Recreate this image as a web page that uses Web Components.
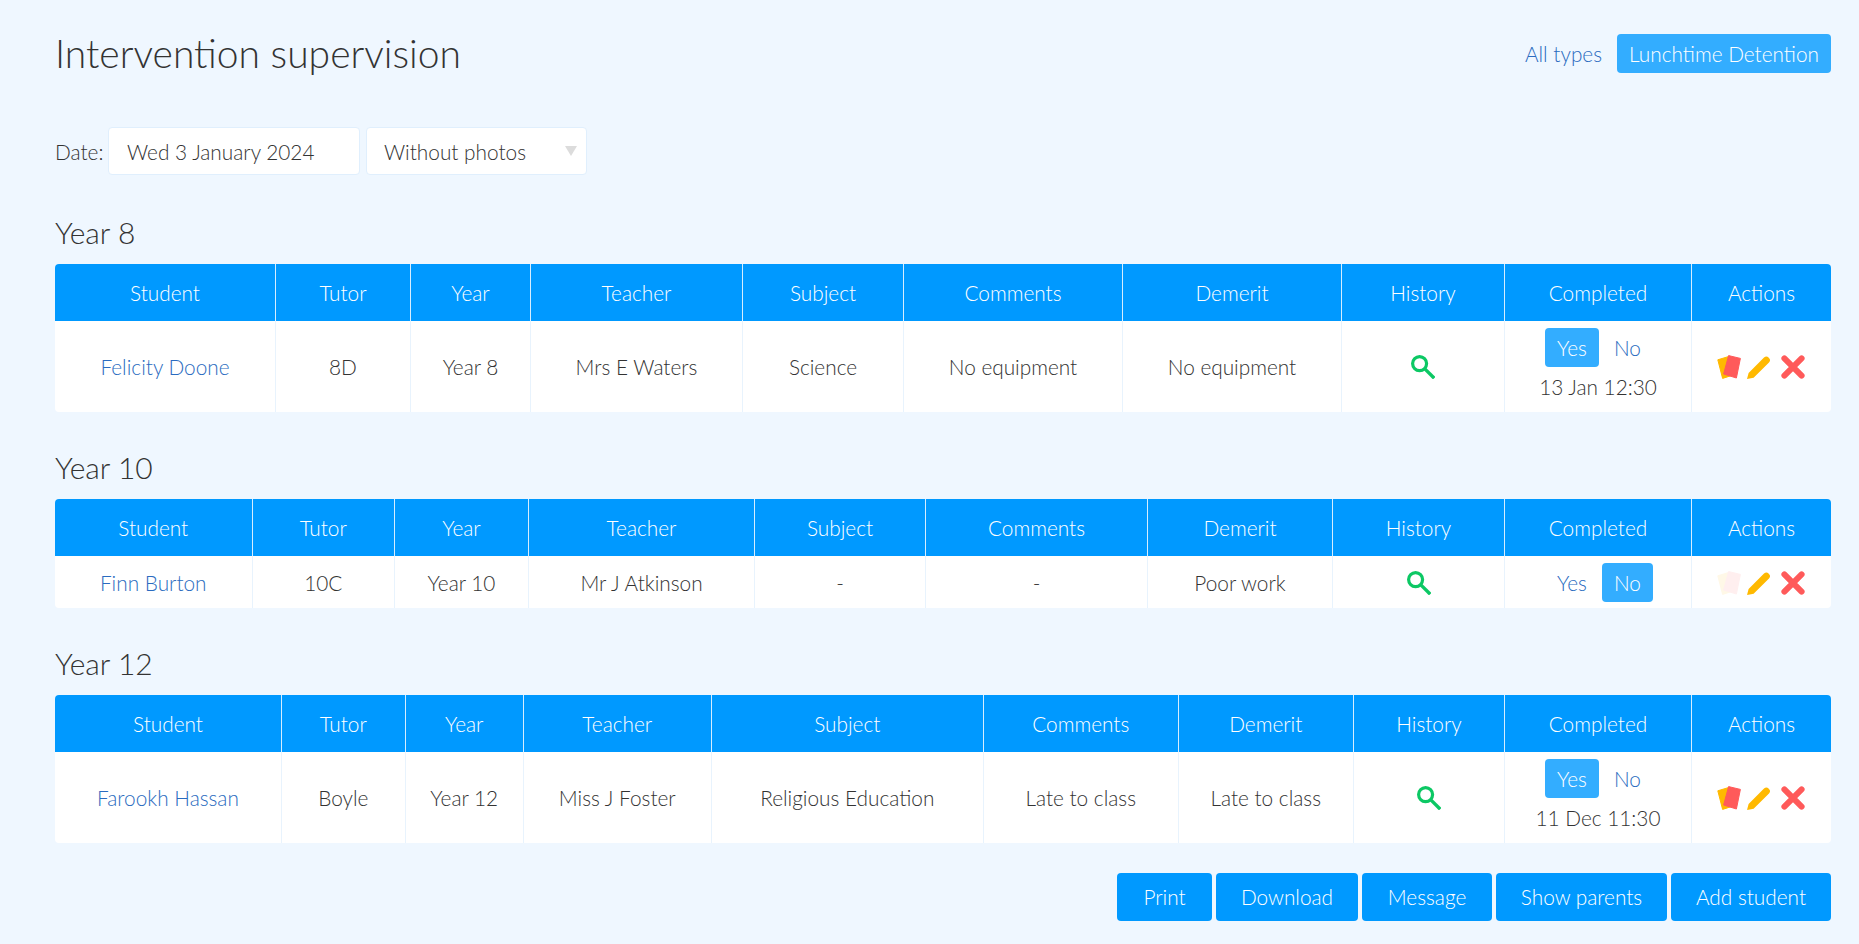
<!DOCTYPE html>
<html lang="en">
<head>
<meta charset="utf-8">
<title>Intervention supervision</title>
<style>
  html, body { margin: 0; padding: 0; background: #eff7ff; }
  body { font-family: Lato, "Liberation Sans", sans-serif; font-weight: 300; font-size: 20.8px; color: #333; }
</style>
</head>
<body>
<intervention-page>
  <page-header heading="Intervention supervision">
    <a-link>All types</a-link>
    <a-button variant="active">Lunchtime Detention</a-button>
  </page-header>
  <date-filter date="Wed 3 January 2024" mode="Without photos"></date-filter>
  <year-table heading="Year 8" edges="55,276,411,531,743,904,1123,1342,1505,1692,1831"
    data='{"student":"Felicity Doone","tutor":"8D","year":"Year 8","teacher":"Mrs E Waters","subject":"Science","comments":"No equipment","demerit":"No equipment","done":"yes","date":"13 Jan 12:30"}'></year-table>
  <year-table heading="Year 10" edges="55,252.5,395,529,755,926,1148,1333,1505,1692,1831"
    data='{"student":"Finn Burton","tutor":"10C","year":"Year 10","teacher":"Mr J Atkinson","subject":"-","comments":"-","demerit":"Poor work","done":"no","faded":true}'></year-table>
  <year-table heading="Year 12" edges="55,282,405.5,524,711.5,984,1178.5,1354,1505,1692,1831"
    data='{"student":"Farookh Hassan","tutor":"Boyle","year":"Year 12","teacher":"Miss J Foster","subject":"Religious Education","comments":"Late to class","demerit":"Late to class","done":"yes","date":"11 Dec 11:30"}'></year-table>
  <action-bar>
    <a-button variant="solid" w="95">Print</a-button>
    <a-button variant="solid" w="142">Download</a-button>
    <a-button variant="solid" w="130">Message</a-button>
    <a-button variant="solid" w="171">Show parents</a-button>
    <a-button variant="solid" w="160">Add student</a-button>
  </action-bar>
</intervention-page>

<script>
function shadow(el, html) {
  el.attachShadow({ mode: 'open' }).innerHTML = html;
}

customElements.define('intervention-page', class extends HTMLElement {
  connectedCallback() {
    shadow(this, `<style>
      :host { display: block; box-sizing: border-box; width: 1859px; height: 944px; padding: 34px 28px 0 55px; overflow: hidden; }
    </style><slot></slot>`);
  }
});

customElements.define('page-header', class extends HTMLElement {
  connectedCallback() {
    shadow(this, `<style>
      :host { display: flex; justify-content: space-between; align-items: flex-start; height: 93px; }
      h1 { margin: -5px 0 0 0; font: 300 39px/48px Lato, sans-serif; color: #333; height: 48px; }
      .right { display: flex; align-items: center; gap: 15px; }
    </style><h1>${this.getAttribute('heading')}</h1><div class="right"><slot></slot></div>`);
  }
});

customElements.define('a-link', class extends HTMLElement {
  connectedCallback() {
    shadow(this, `<style>
      :host { display: inline-block; color: #2a6bc0; font-size: 20.8px; line-height: 24px; }
    </style><slot></slot>`);
  }
});

customElements.define('a-button', class extends HTMLElement {
  connectedCallback() {
    const solid = this.getAttribute('variant') === 'solid';
    const w = this.getAttribute('w');
    shadow(this, `<style>
      :host { display: inline-flex; align-items: center; justify-content: center; box-sizing: border-box;
        border-radius: 4px; color: #fff; font-size: 20.8px; white-space: nowrap;
        background: ${solid ? '#0099ff' : '#33adff'};
        height: ${solid ? 48 : 39}px; ${w ? `width: ${w}px; padding-bottom: 2px;` : 'padding: 0 12px;'} }
    </style><slot></slot>`);
  }
});

customElements.define('date-filter', class extends HTMLElement {
  connectedCallback() {
    shadow(this, `<style>
      :host { display: flex; align-items: center; height: 48px; margin-bottom: 2px; color: #333; font-size: 20.8px; }
      .label { width: 53px; flex: none; }
      .box { box-sizing: border-box; height: 48px; background: #fff; border: 1px solid #e0effd; border-radius: 4px;
        display: flex; align-items: center; flex: none; padding-top: 1px; }
      .date { width: 252px; padding-left: 18px; margin-right: 6px; }
      .select { width: 221px; padding-left: 17px; position: relative; }
      .arrow { position: absolute; right: 9px; top: 18px; width: 0; height: 0;
        border-left: 6px solid transparent; border-right: 6px solid transparent; border-top: 10px solid #dcdcdc; }
    </style>
    <span class="label">Date:</span>
    <div class="box date">${this.getAttribute('date')}</div>
    <div class="box select">${this.getAttribute('mode')}<span class="arrow"></span></div>`);
  }
});

customElements.define('icon-history', class extends HTMLElement {
  connectedCallback() {
    shadow(this, `<style>:host { display: block; width: 24px; height: 24px; margin: 0 auto; } svg { display: block; }</style>
    <svg width="24" height="24" viewBox="0 0 24 24" fill="none" stroke="#0cc864">
      <circle cx="8.6" cy="8.6" r="7" stroke-width="3.2"/>
      <path d="M13.6 13.6 L23.2 23.2" stroke-width="3.4"/>
    </svg>`);
  }
});

customElements.define('icon-actions', class extends HTMLElement {
  connectedCallback() {
    const op = this.hasAttribute('faded') ? 0.09 : 1;
    shadow(this, `<style>
      :host { display: flex; justify-content: center; gap: 8px; padding-right: 2px; }
      svg { display: block; overflow: visible; }
    </style>
    <svg width="24" height="24" viewBox="0 0 24 24" opacity="${op}">
      <path d="M.8 4.8 L12 1.4 L15 20.4 L5.6 23.4 Z" fill="#ffb900" stroke="#ffb900" stroke-linejoin="round"/>
      <path d="M11.6 .6 L23.4 3.4 L19.4 23 L6.6 19 Z" fill="#ff5a5a" stroke="#ff5a5a" stroke-linejoin="round"/>
    </svg>
    <svg width="24" height="24" viewBox="0 0 24 24">
      <path d="M-2 24 L-.4 18 L15 2.6 Q17.4 .4 19.8 2.7 Q22.2 5 20 7.4 L4.6 22.8 Z" fill="#ffb900"/>
    </svg>
    <svg width="24" height="24" viewBox="0 0 24 24">
      <path d="M3.4 3.4 L20.6 20.6 M20.6 3.4 L3.4 20.6" stroke="#ff5a5a" stroke-width="6" stroke-linecap="round"/>
    </svg>`);
  }
});

customElements.define('yes-no', class extends HTMLElement {
  connectedCallback() {
    const v = this.getAttribute('value');
    const date = this.getAttribute('date');
    shadow(this, `<style>
      :host { display: block; text-align: center; }
      .row { display: flex; justify-content: center; gap: 3px; height: 39px; padding-left: 2px; }
      .opt { box-sizing: border-box; height: 39px; line-height: 39px; padding: 0 12px; color: #2a6bc0; border-radius: 4px; }
      .on { background: #33adff; color: #fff; }
      .date { line-height: 39px; height: 39px; color: #333; }
    </style>
    <div class="row"><span class="opt ${v === 'yes' ? 'on' : ''}">Yes</span><span class="opt ${v === 'no' ? 'on' : ''}">No</span></div>
    ${date ? `<div class="date">${date}</div>` : ''}`);
  }
});

customElements.define('year-table', class extends HTMLElement {
  connectedCallback() {
    const edges = this.getAttribute('edges').split(',').map(Number);
    const d = JSON.parse(this.getAttribute('data'));
    const heads = ['Student','Tutor','Year','Teacher','Subject','Comments','Demerit','History','Completed','Actions'];
    const cols = heads.map((_, i) => `<col style="width:${edges[i+1]-edges[i]}px">`).join('');
    shadow(this, `<style>
      :host { display: block; }
      h2 { margin: 0; font: 300 30px/35px Lato, sans-serif; color: #333; padding-top: 38px; height: 49px; }
      .wrap { border-radius: 4px; overflow: hidden; background: #fff; }
      table { border-collapse: separate; border-spacing: 0; table-layout: fixed; width: 100%; font-size: 20.8px; }
      th { height: 57px; padding: 0; background: #0099ff; color: #fff; font-weight: 300; border-right: 1px solid #d6edff; box-sizing: border-box; }
      td { padding: 7px 0 6px; text-align: center; vertical-align: middle; color: #333; border-right: 1px solid #e8f3fd; box-sizing: border-box; }
      tr.tall td:not(.toggle) { padding-bottom: 7px; }
      th:last-child, td:last-child { border-right: 0; }
      .link { color: #2a6bc0; }
    </style>
    <h2>${this.getAttribute('heading')}</h2>
    <div class="wrap"><table><colgroup>${cols}</colgroup>
      <thead><tr>${heads.map(h => `<th>${h}</th>`).join('')}</tr></thead>
      <tbody><tr class="${d.date ? 'tall' : ''}">
        <td class="link">${d.student}</td><td>${d.tutor}</td><td>${d.year}</td><td>${d.teacher}</td>
        <td>${d.subject}</td><td>${d.comments}</td><td>${d.demerit}</td>
        <td><icon-history></icon-history></td>
        <td class="toggle"><yes-no value="${d.done}" ${d.date ? `date="${d.date}"` : ''}></yes-no></td>
        <td><icon-actions ${d.faded ? 'faded' : ''}></icon-actions></td>
      </tr></tbody></table></div>`);
  }
});

customElements.define('action-bar', class extends HTMLElement {
  connectedCallback() {
    shadow(this, `<style>
      :host { display: flex; justify-content: flex-end; gap: 4px; margin-top: 30px; }
    </style><slot></slot>`);
  }
});
</script>
</body>
</html>
